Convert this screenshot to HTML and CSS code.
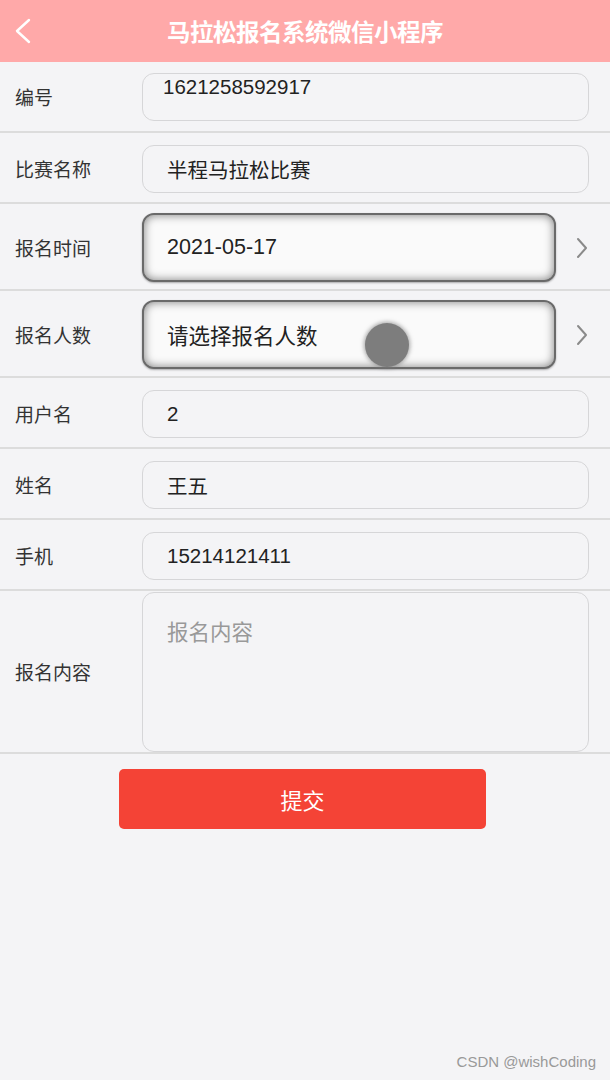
FILE: index.html
```html
<!DOCTYPE html>
<html lang="zh-CN">
<head>
  <meta charset="UTF-8">
  <title>马拉松报名系统微信小程序</title>
  <link rel="stylesheet" href="styles.css">
</head>
<body>
  <div class="page">
    <div class="navbar">
      <span class="back">
        <svg width="18" height="26" viewBox="0 0 18 26"><path d="M15 2 L3 13 L15 24" fill="none" stroke="#fff" stroke-width="2.4" stroke-linecap="round" stroke-linejoin="round"/></svg>
      </span>
      <h1>马拉松报名系统微信小程序</h1>
      <span></span>
    </div>

    <form class="form">
      <div class="row first">
        <label>编号</label>
        <div class="field top">1621258592917</div>
      </div>
      <div class="row">
        <label>比赛名称</label>
        <div class="field">半程马拉松比赛</div>
      </div>
      <div class="row picker-row">
        <label>报名时间</label>
        <div class="picker">2021-05-17</div>
        <svg class="arrow" width="12" height="22" viewBox="0 0 12 22"><path d="M2 2 L10 11 L2 20" fill="none" stroke="#8a8a8a" stroke-width="2" stroke-linecap="round" stroke-linejoin="round"/></svg>
      </div>
      <div class="row picker-row">
        <label>报名人数</label>
        <div class="picker">请选择报名人数</div>
        <svg class="arrow" width="12" height="22" viewBox="0 0 12 22"><path d="M2 2 L10 11 L2 20" fill="none" stroke="#8a8a8a" stroke-width="2" stroke-linecap="round" stroke-linejoin="round"/></svg>
      </div>
      <div class="row">
        <label>用户名</label>
        <div class="field">2</div>
      </div>
      <div class="row">
        <label>姓名</label>
        <div class="field">王五</div>
      </div>
      <div class="row">
        <label>手机</label>
        <div class="field">15214121411</div>
      </div>
      <div class="row area-row">
        <label>报名内容</label>
        <div class="textarea">报名内容</div>
      </div>

      <div class="actions">
        <button type="button" class="submit">提交</button>
      </div>
    </form>

    <!-- touch emulator cursor -->
    <div class="touch"></div>

    <div class="watermark">CSDN @wishCoding</div>
  </div>
</body>
</html>
```

FILE: styles.css
```css
* {
  margin: 0;
  padding: 0;
  box-sizing: border-box;
  font-family: "Liberation Sans", "Noto Sans CJK SC", sans-serif;
}

body {
  background: #f4f4f6;
  width: 610px;
  height: 1080px;
  overflow: hidden;
}

.page {
  position: relative;
  height: 1080px;
}

.navbar {
  height: 62px;
  background: #ffa9a9;
  display: grid;
  grid-template-columns: 60px 1fr 60px;
  align-items: center;
}

.back {
  padding-left: 14px;
  padding-top: 4px;
}

.navbar h1 {
  text-align: center;
  color: #fff;
  font-size: 23.5px;
  font-weight: bold;
  letter-spacing: -0.5px;
  font-family: "Noto Sans CJK SC", sans-serif;
}

.row {
  display: flex;
  align-items: center;
  height: 71px;
  padding-top: 2px;
  border-bottom: 2px solid #dcdcdc;
}

.row.first {
  height: 71px;
  padding-top: 0;
}

.row label {
  width: 142px;
  padding-left: 15px;
  font-size: 19px;
  color: #333;
}

.field {
  width: 447px;
  height: 48px;
  border: 1px solid #d6d6d8;
  border-radius: 12px;
  background: #f4f4f6;
  padding: 0 24px;
  font-size: 20.5px;
  color: #222;
  display: flex;
  align-items: center;
}

.field.top {
  align-items: flex-start;
  padding: 1px 20px 0;
}

.picker-row {
  height: 87px;
}

.picker {
  width: 414px;
  height: 69px;
  border: 2px solid #6a6a6a;
  border-radius: 12px;
  background: #fafafa;
  box-shadow: inset 0 0 10px rgba(0, 0, 0, 0.5), 0 1px 2px rgba(0, 0, 0, 0.3);
  padding: 0 23px;
  font-size: 21.5px;
  color: #222;
  display: flex;
  align-items: center;
}

.arrow {
  margin-left: 20px;
}

.area-row {
  height: 163px;
  padding-top: 0;
}

.textarea {
  width: 447px;
  height: 160px;
  border: 1px solid #d6d6d8;
  border-radius: 12px;
  background: #f4f4f6;
  padding: 22px 24px;
  font-size: 21.5px;
  color: #999;
}

.actions {
  padding-top: 15px;
  padding-left: 119px;
}

.submit {
  width: 367px;
  height: 60px;
  border: none;
  border-radius: 5px;
  background: #f44336;
  color: #fff;
  font-size: 22px;
  font-family: "Noto Sans CJK SC", sans-serif;
}

.touch {
  position: absolute;
  left: 365px;
  top: 323px;
  width: 44px;
  height: 44px;
  border-radius: 50%;
  background: #7d7d7d;
  box-shadow: 0 0 4px 1px rgba(125, 125, 125, 0.7);
}

.watermark {
  position: absolute;
  right: 14px;
  bottom: 10px;
  font-size: 15px;
  color: #999;
}
```
